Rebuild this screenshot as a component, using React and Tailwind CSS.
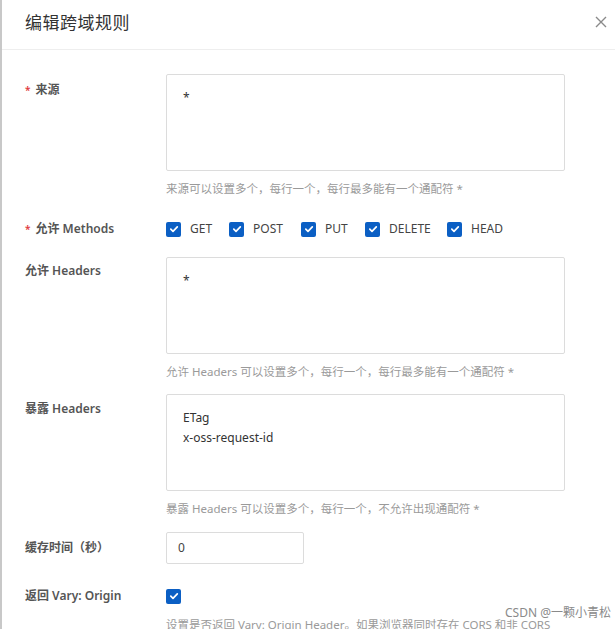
import React from "react";

const F = { fontFamily: '"Noto Sans", "Noto Sans CJK SC", sans-serif' };

function Check() {
  return (
    <span className="w-[15px] h-[15px] rounded-[2px] bg-[#0b5fc4] flex items-center justify-center shrink-0">
      <svg width="10" height="10" viewBox="0 0 10 10">
        <path d="M1.8 5.2 L4 7.3 L8.3 2.8" fill="none" stroke="white" strokeWidth="1.7" strokeLinecap="round" strokeLinejoin="round" />
      </svg>
    </span>
  );
}

function Label({ req, children }) {
  return (
    <div className="w-[141px] shrink-0 text-[12px] font-semibold text-[#555] leading-[16px] flex items-center">
      {req && <span className="text-[#e0393e] mr-[5px] text-[10px]">*</span>}
      {children}
    </div>
  );
}

function Help({ children }) {
  return <div className="text-[11.5px] text-[#9a9a9a] leading-[16px] mt-[10px]">{children}</div>;
}

function Area({ lines }) {
  return (
    <div className="w-[399px] h-[97px] border border-[#dcdcdc] rounded-[2px] px-[16px] pt-[13px] text-[12px] text-[#333] leading-[20px]">
      {lines.map((l, i) => (
        <div key={i}>{l}</div>
      ))}
    </div>
  );
}

export default function App() {
  const methods = [
    ["GET", "w-[63px]"],
    ["POST", "w-[72px]"],
    ["PUT", "w-[64px]"],
    ["DELETE", "w-[82px]"],
    ["HEAD", ""],
  ];
  return (
    <div style={F} className="w-[615px] h-[629px] overflow-hidden bg-white relative border-l-[2px] border-[#c8c8c8]">
      <div className="h-[50px] border-b border-[#eeeeee] flex items-center justify-between pl-[23px] pr-[8px]">
        <div className="text-[17px] text-[#333] tracking-[0.5px] mb-[4px]">编辑跨域规则</div>
        <svg width="12" height="12" viewBox="0 0 12 12" className="mb-[6px]">
          <path d="M1 1 L11 11 M11 1 L1 11" stroke="#8a8a8a" strokeWidth="1.4" />
        </svg>
      </div>

      <div className="pl-[23px] pt-[24px] flex flex-col">
        <div className="flex">
          <div className="pt-[8px]"><Label req>来源</Label></div>
          <div>
            <Area lines={["*"]} />
            <Help>来源可以设置多个，每行一个，每行最多能有一个通配符 *</Help>
          </div>
        </div>

        <div className="flex mt-[23px] items-center h-[18px]">
          <Label req>允许 Methods</Label>
          <div className="flex items-center text-[12px] text-[#444]">
            {methods.map(([m, w]) => (
              <div key={m} className={"flex items-center gap-[9px] " + w}>
                <Check />
                <span>{m}</span>
              </div>
            ))}
          </div>
        </div>

        <div className="flex mt-[19px]">
          <div className="pt-[6px]"><Label>允许 Headers</Label></div>
          <div>
            <Area lines={["*"]} />
            <Help>允许 Headers 可以设置多个，每行一个，每行最多能有一个通配符 *</Help>
          </div>
        </div>

        <div className="flex mt-[14px]">
          <div className="pt-[7px]"><Label>暴露 Headers</Label></div>
          <div>
            <Area lines={["ETag", "x-oss-request-id"]} />
            <Help>暴露 Headers 可以设置多个，每行一个，不允许出现通配符 *</Help>
          </div>
        </div>

        <div className="flex mt-[15px] items-center">
          <Label>缓存时间（秒）</Label>
          <div className="w-[138px] h-[32px] border border-[#dcdcdc] rounded-[2px] flex items-center pl-[11px] text-[12px] text-[#444]">0</div>
        </div>

        <div className="flex mt-[24px] items-center">
          <Label>返回 Vary: Origin</Label>
          <Check />
        </div>
        <div className="ml-[141px] mt-[13px] text-[11.5px] text-[#9a9a9a] leading-[16px] whitespace-nowrap">
          设置是否返回 Vary: Origin Header。如果浏览器同时存在 CORS 和非 CORS
        </div>
      </div>

      <div className="absolute right-[4px] bottom-[9px] text-[12px] text-[#8a8a8a] bg-white/60 leading-[14px]">
        CSDN @一颗小青松
      </div>
    </div>
  );
}
